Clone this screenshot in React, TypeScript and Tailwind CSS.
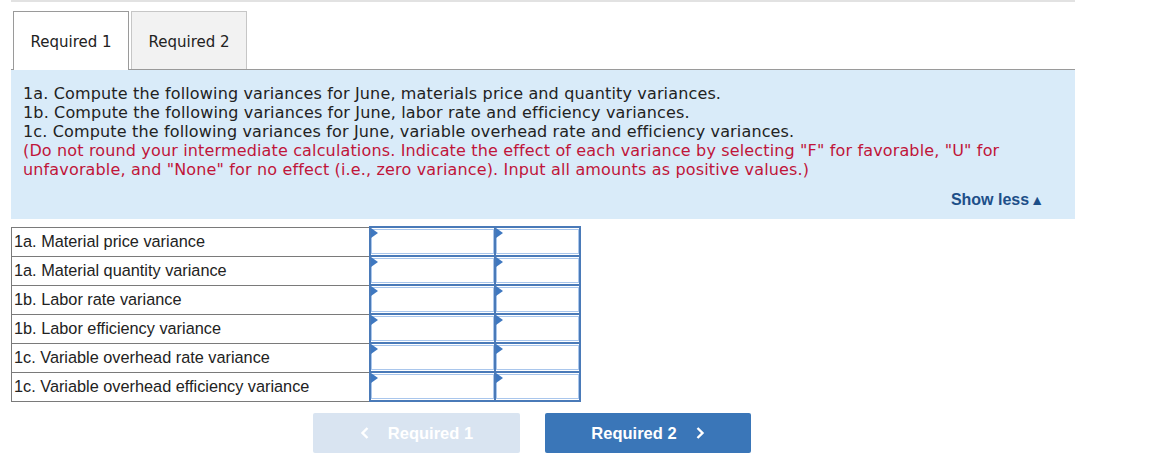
import React from "react";

const rows = [
  "1a. Material price variance",
  "1a. Material quantity variance",
  "1b. Labor rate variance",
  "1b. Labor efficiency variance",
  "1c. Variable overhead rate variance",
  "1c. Variable overhead efficiency variance",
];

function InputCell({ width }: { width: string }) {
  return (
    <td className={`relative p-0 border-2 border-[#4a7ab8] ${width}`}>
      <div className="h-[25px] border border-[#a9c6ec] bg-white" />
      <span className="absolute left-0 top-0 w-0 h-0 border-t-[5px] border-b-[5px] border-l-[7px] border-t-transparent border-b-transparent border-l-[#3f78c0]" />
    </td>
  );
}

export default function App() {
  return (
    <div className="w-[1169px] h-[475px] bg-white font-['DejaVu_Sans',Verdana,sans-serif]">
      <div className="ml-[11px] w-[1064px]">
        <div className="h-[2px] bg-[#e2e2e2]" />

        {/* tabs */}
        <div className="flex gap-[2px] pl-[2px] mt-[9px] h-[58px]">
          <div className="w-[116px] h-[59px] border border-[#9a9a9a] border-b-0 bg-white flex items-center justify-center pt-[3px] text-[15px] text-[#222] relative z-10">
            Required 1
          </div>
          <div className="w-[116px] h-[58px] border border-[#c6c6c6] border-b-0 bg-[#f2f2f2] flex items-center justify-center pt-[3px] text-[15px] text-[#222]">
            Required 2
          </div>
        </div>

        {/* instructions */}
        <div className="border-t border-[#9a9a9a] bg-[#d9ebf9] h-[150px] pl-[12px] pr-[31px] pt-[14px] text-[16px] tracking-[0.15px] leading-[19px]">
          <p className="text-[#222]">1a. Compute the following variances for June, materials price and quantity variances.</p>
          <p className="text-[#222]">1b. Compute the following variances for June, labor rate and efficiency variances.</p>
          <p className="text-[#222]">1c. Compute the following variances for June, variable overhead rate and efficiency variances.</p>
          <p className="text-[#c0153a] pr-[40px]">
            (Do not round your intermediate calculations. Indicate the effect of each variance by selecting "F" for favorable, "U" for unfavorable, and "None" for no effect (i.e., zero variance). Input all amounts as positive values.)
          </p>
          <div className="flex justify-end mt-[11px]">
            <span className="font-['Liberation_Sans',Arial,sans-serif] font-bold text-[16px] tracking-normal text-[#1d4f89]">
              Show less<span className="text-[14px] ml-[1px]">▲</span>
            </span>
          </div>
        </div>

        {/* table */}
        <table className="mt-[7px] border-collapse border border-[#7a7a7a] font-['Liberation_Sans',Arial,sans-serif] text-[16.3px] text-[#222]">
          <tbody>
            {rows.map((r) => (
              <tr key={r} className="h-[29px]">
                <td className="w-[358px] border border-[#7a7a7a] pl-[2px] py-0 leading-[27px]">{r}</td>
                <InputCell width="w-[125px]" />
                <InputCell width="w-[85px]" />
              </tr>
            ))}
          </tbody>
        </table>

        {/* nav buttons */}
        <div className="flex gap-[25px] ml-[302px] mt-[11px] font-['Liberation_Sans',Arial,sans-serif]">
          <div className="w-[207px] h-[40px] rounded-[2px] bg-[#d9e4f1] text-white font-bold text-[16.5px] flex items-center justify-center gap-[18px]">
            <svg width="10" height="14" viewBox="0 0 10 14"><path d="M7.5 2 L2.5 7 L7.5 12" stroke="white" strokeWidth="2.4" fill="none" /></svg>
            <span>Required 1</span>
          </div>
          <div className="w-[206px] h-[40px] rounded-[2px] bg-[#3a76b8] text-white font-bold text-[16.5px] flex items-center justify-center gap-[18px]">
            <span>Required 2</span>
            <svg width="10" height="14" viewBox="0 0 10 14"><path d="M2.5 2 L7.5 7 L2.5 12" stroke="white" strokeWidth="2.4" fill="none" /></svg>
          </div>
        </div>
      </div>
    </div>
  );
}
